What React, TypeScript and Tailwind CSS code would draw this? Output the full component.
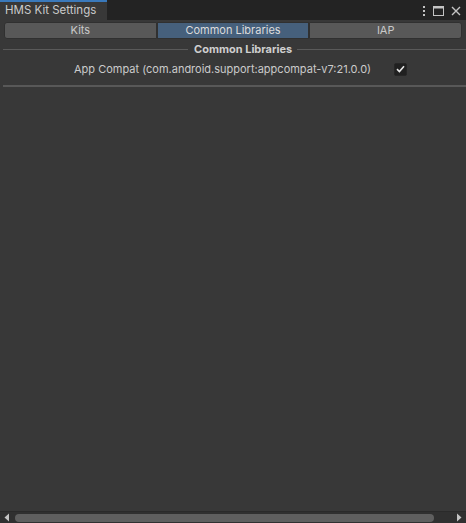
import React from 'react';

const tabs = ['Kits', 'Common Libraries', 'IAP'];

const TitleIcons = () => (
  <div className="flex items-center gap-[7px] pr-[5px] pt-[1px]">
    <svg width="4" height="12" viewBox="0 0 4 12">
      <rect x="1" y="1" width="2" height="2" fill="#c4c4c4" />
      <rect x="1" y="5" width="2" height="2" fill="#c4c4c4" />
      <rect x="1" y="9" width="2" height="2" fill="#c4c4c4" />
    </svg>
    <svg width="11" height="10" viewBox="0 0 11 10">
      <rect x="0.5" y="0.5" width="10" height="9" fill="none" stroke="#c4c4c4" />
      <rect x="0.5" y="0.5" width="10" height="2" fill="#c4c4c4" />
    </svg>
    <svg width="10" height="10" viewBox="0 0 10 10">
      <path d="M1 1 L9 9 M9 1 L1 9" stroke="#c4c4c4" strokeWidth="1.4" />
    </svg>
  </div>
);

export default function App() {
  const active = 1;

  return (
    <div
      className="flex h-[523px] w-[466px] flex-col overflow-hidden bg-[#383838] text-[11px] text-[#cbcbcb]"
      style={{ fontFamily: 'Inter, "Noto Sans", sans-serif' }}
    >
      {/* window tab strip */}
      <div className="flex h-[20px] items-stretch justify-between bg-[#232323]">
        <div className="flex w-[107px] items-center border-t-2 border-[#3a79bb] bg-[#383838] pl-[5px] text-[11.5px] leading-none">
          HMS Kit Settings
        </div>
        <TitleIcons />
      </div>

      {/* toolbar */}
      <div className="flex px-[4px] pt-[2px]">
        {tabs.map((t, i) => (
          <div
            key={t}
            className={`flex h-[17px] flex-1 items-center justify-center border border-[#303030] leading-none ${
              i === 0 ? 'rounded-l-[3px]' : ''
            } ${i === tabs.length - 1 ? 'rounded-r-[3px]' : ''} ${
              i === active ? 'bg-[#46607c] text-[#dcdcdc]' : 'bg-[#585858] text-[#c8c8c8]'
            }`}
          >
            {t}
          </div>
        ))}
      </div>

      {/* section header */}
      <div className="mt-[4px] flex h-[13px] items-center pl-[3px]">
        <div className="h-[1.5px] w-[185px] bg-[#5a5a5a]" />
        <div className="pl-[6px] pr-[5px] font-bold leading-none text-[#cfcfcf]">Common Libraries</div>
        <div className="h-[1.5px] flex-1 bg-[#5a5a5a]" />
      </div>

      {/* library row */}
      <div className="mt-[5px] flex h-[16px] items-center">
        <span className="ml-[74px] w-[320px] whitespace-nowrap leading-none">
          App Compat (com.android.support:appcompat-v7:21.0.0)
        </span>
        <div className="flex h-[13px] w-[13px] items-center justify-center rounded-[2px] border border-[#262626] bg-[#202020]">
          <svg width="9" height="8" viewBox="0 0 9 8">
            <path d="M1 4.2 L3.4 6.5 L8 1.2" fill="none" stroke="#e6e6e6" strokeWidth="1.6" />
          </svg>
        </div>
      </div>

      <div className="ml-[3px] mt-[8px] h-[2px] bg-[#585858]" />

      <div className="flex-1" />

      {/* horizontal scrollbar */}
      <div className="flex h-[12px] items-center border-t border-[#2a2a2a] bg-[#303030] px-[3px]">
        <svg width="8" height="9" viewBox="0 0 8 9">
          <path d="M6 0.5 L1.5 4.5 L6 8.5 Z" fill="#c4c4c4" />
        </svg>
        <div className="ml-[4px] h-[8px] w-[419px] rounded-full bg-[#5f5f5f]" />
        <div className="flex-1" />
        <svg width="8" height="9" viewBox="0 0 8 9">
          <path d="M2 0.5 L6.5 4.5 L2 8.5 Z" fill="#c4c4c4" />
        </svg>
      </div>
    </div>
  );
}
